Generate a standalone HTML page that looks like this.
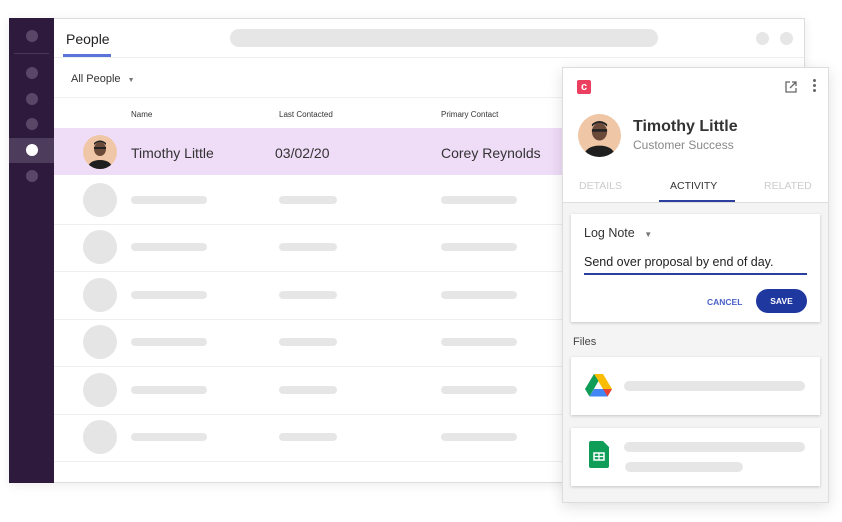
<!DOCTYPE html>
<html><head><meta charset="utf-8"><style>
*{box-sizing:border-box;margin:0;padding:0}
body{width:842px;height:522px;background:#fff;font-family:"Liberation Sans",Arial,sans-serif;position:relative;overflow:hidden;color:#333}
.abs{position:absolute}
.win{left:9px;top:18px;width:796px;height:465px;background:#fff;border:1px solid #ddd;box-shadow:0 2px 10px rgba(0,0,0,.08)}
.side{left:9px;top:18px;width:45px;height:465px;background:#2e1a3d}
.dot{position:absolute;width:12px;height:12px;border-radius:50%;background:#5a4768;left:17px}
.bar{position:absolute;height:8px;border-radius:4px;background:#e6e6e6}
.av{position:absolute;width:34px;height:34px;border-radius:50%;background:#e5e5e5;left:83px}
.row{position:absolute;left:54px;width:750px;height:1px;background:#eee}
.panel{left:562px;top:67px;width:267px;height:436px;background:#f4f4f4;border:1px solid #ddd;box-shadow:0 4px 14px rgba(0,0,0,.12)}
.card{position:absolute;background:#fff;box-shadow:0 1px 3px rgba(0,0,0,.2)}
</style></head><body>
<div class="abs win"></div>
<div class="abs side">
 <div class="dot" style="top:12px"></div>
 <div style="position:absolute;left:5px;top:35px;width:35px;height:1px;background:#4a3858"></div>
 <div class="dot" style="top:49px"></div>
 <div class="dot" style="top:75px"></div>
 <div class="dot" style="top:100px"></div>
 <div style="position:absolute;left:0;top:120px;width:45px;height:25px;background:#4e3c5c"></div>
 <div class="dot" style="top:126px;background:#fff"></div>
 <div class="dot" style="top:152px"></div>
</div>
<div class="abs" style="left:66px;top:31px;font-size:14px;color:#222;font-weight:500">People</div>
<div class="abs" style="left:63px;top:54px;width:48px;height:3px;background:#5a73d8"></div>
<div class="abs" style="left:54px;top:57px;width:750px;height:1px;background:#eee"></div>
<div class="abs" style="left:230px;top:29px;width:428px;height:18px;border-radius:9px;background:#e6e6e6"></div>
<div class="abs" style="left:756px;top:32px;width:13px;height:13px;border-radius:50%;background:#e6e6e6"></div>
<div class="abs" style="left:780px;top:32px;width:13px;height:13px;border-radius:50%;background:#e6e6e6"></div>
<div class="abs" style="left:71px;top:73px;font-size:11px;color:#333">All People <span style="font-size:7px;color:#777;margin-left:4px">▼</span></div>
<div class="abs" style="left:54px;top:97px;width:510px;height:1px;background:#f0f0f0"></div>
<div class="abs" style="left:131px;top:110px;font-size:8px;color:#333">Name</div>
<div class="abs" style="left:279px;top:110px;font-size:8px;color:#333">Last Contacted</div>
<div class="abs" style="left:441px;top:110px;font-size:8px;color:#333">Primary Contact</div>
<div class="abs" style="left:54px;top:128px;width:510px;height:47px;background:#efdcf7"></div>
<svg class="abs" style="left:83px;top:135px" width="34" height="34" viewBox="0 0 34 34"><clipPath id="c1"><circle cx="17" cy="17" r="17"/></clipPath><g clip-path="url(#c1)"><rect width="34" height="34" fill="#f0c7a6"/><ellipse cx="17" cy="14" rx="6" ry="7" fill="#6b4a3a"/><path d="M11 10q6-6 12 0v-2q-6-5-12 0z" fill="#222"/><rect x="11" y="12" width="12" height="2" fill="#222"/><path d="M4 34q2-9 13-9q11 0 13 9z" fill="#1f1f1f"/></g></svg>
<div class="abs" style="left:131px;top:145px;font-size:14px;color:#333">Timothy Little</div>
<div class="abs" style="left:275px;top:145px;font-size:14px;color:#333">03/02/20</div>
<div class="abs" style="left:441px;top:145px;font-size:14px;color:#333">Corey Reynolds</div>
<div id="rows"></div>
<script>
var h='';[200,247,295,342,390,437].forEach(function(c){h+='<div class="av" style="top:'+(c-17)+'px"></div><div class="bar" style="left:131px;top:'+(c-4)+'px;width:76px"></div><div class="bar" style="left:279px;top:'+(c-4)+'px;width:58px"></div><div class="bar" style="left:441px;top:'+(c-4)+'px;width:76px"></div><div class="row" style="top:'+(c+24)+'px"></div>';});
document.getElementById('rows').innerHTML=h;
</script>
<div class="abs panel">
 <div style="position:absolute;left:0;top:0;width:265px;height:135px;background:#fff;border-bottom:1px solid #ddd"></div>
 <div style="position:absolute;left:14px;top:12px;width:14px;height:14px;background:#ec3e5e;border-radius:2px;color:#fff;font-size:11px;font-weight:bold;text-align:center;line-height:14px">c</div>
 <svg style="position:absolute;left:221px;top:12px" width="14" height="14" viewBox="0 0 14 14"><path d="M6 2H2v10h10V8M8 2h4v4M12 2L6 8" stroke="#666" stroke-width="1.3" fill="none"/></svg>
 <div style="position:absolute;left:250px;top:11px;width:3px;line-height:0"><div style="width:3px;height:3px;border-radius:50%;background:#666;margin-bottom:2px"></div><div style="width:3px;height:3px;border-radius:50%;background:#666;margin-bottom:2px"></div><div style="width:3px;height:3px;border-radius:50%;background:#666"></div></div>
 <svg style="position:absolute;left:15px;top:46px" width="43" height="43" viewBox="0 0 34 34"><clipPath id="c2"><circle cx="17" cy="17" r="17"/></clipPath><g clip-path="url(#c2)"><rect width="34" height="34" fill="#f0c7a6"/><ellipse cx="17" cy="14" rx="6" ry="7" fill="#6b4a3a"/><path d="M11 10q6-6 12 0v-2q-6-5-12 0z" fill="#222"/><rect x="11" y="12" width="12" height="2" fill="#222"/><path d="M4 34q2-9 13-9q11 0 13 9z" fill="#1f1f1f"/></g></svg>
 <div style="position:absolute;left:70px;top:50px;font-size:16px;font-weight:bold;color:#333">Timothy Little</div>
 <div style="position:absolute;left:70px;top:70px;font-size:12px;color:#888">Customer Success</div>
 <div style="position:absolute;left:16px;top:112px;font-size:10.5px;color:#ccc">DETAILS</div>
 <div style="position:absolute;left:107px;top:112px;font-size:10.5px;color:#333">ACTIVITY</div>
 <div style="position:absolute;left:201px;top:112px;font-size:10.5px;color:#ccc">RELATED</div>
 <div style="position:absolute;left:96px;top:132px;width:76px;height:2px;background:#2d3f9e"></div>
 <div class="card" style="left:8px;top:146px;width:249px;height:108px">
  <div style="position:absolute;left:13px;top:12px;font-size:12.5px;color:#333">Log Note <span style="font-size:8px;color:#777;margin-left:6px">▼</span></div>
  <div style="position:absolute;left:13px;top:41px;font-size:12.5px;color:#222">Send over proposal by end of day.</div>
  <div style="position:absolute;left:13px;top:59px;width:223px;height:2px;background:#2d3f9e"></div>
  <div style="position:absolute;left:136px;top:83px;font-size:8.5px;font-weight:bold;color:#4a62c7">CANCEL</div>
  <div style="position:absolute;left:185px;top:75px;width:51px;height:24px;border-radius:12px;background:#1f38a0;color:#fff;font-size:8.5px;font-weight:bold;text-align:center;line-height:24px">SAVE</div>
 </div>
 <div style="position:absolute;left:10px;top:268px;font-size:11px;color:#444">Files</div>
 <div class="card" style="left:8px;top:289px;width:249px;height:58px">
  <svg style="position:absolute;left:14px;top:16px" width="27" height="24" viewBox="0 0 27 24"><path d="M9 1h9l9 15h-9z" fill="#fbbc04"/><path d="M9 1L0 16l4.5 7.5L13.5 8z" fill="#0f9d58"/><path d="M4.5 23.5h18L27 16H9z" fill="#4285f4"/><path d="M22.5 23.5L27 16h-9z" fill="#ea4335"/></svg>
  <div class="bar" style="left:53px;top:24px;width:181px;height:10px;border-radius:5px"></div>
 </div>
 <div class="card" style="left:8px;top:360px;width:249px;height:58px">
  <svg style="position:absolute;left:18px;top:13px" width="20" height="27" viewBox="0 0 20 27"><path d="M0 2a2 2 0 012-2h12l6 6v19a2 2 0 01-2 2H2a2 2 0 01-2-2z" fill="#0f9d58"/><rect x="5" y="12" width="10" height="7" fill="none" stroke="#fff" stroke-width="1.5"/><path d="M5 15.5h10M10 12v7" stroke="#fff" stroke-width="1.3"/></svg>
  <div class="bar" style="left:53px;top:14px;width:181px;height:10px;border-radius:5px"></div>
  <div class="bar" style="left:54px;top:34px;width:118px;height:10px;border-radius:5px"></div>
 </div>
</div>
</body></html>
